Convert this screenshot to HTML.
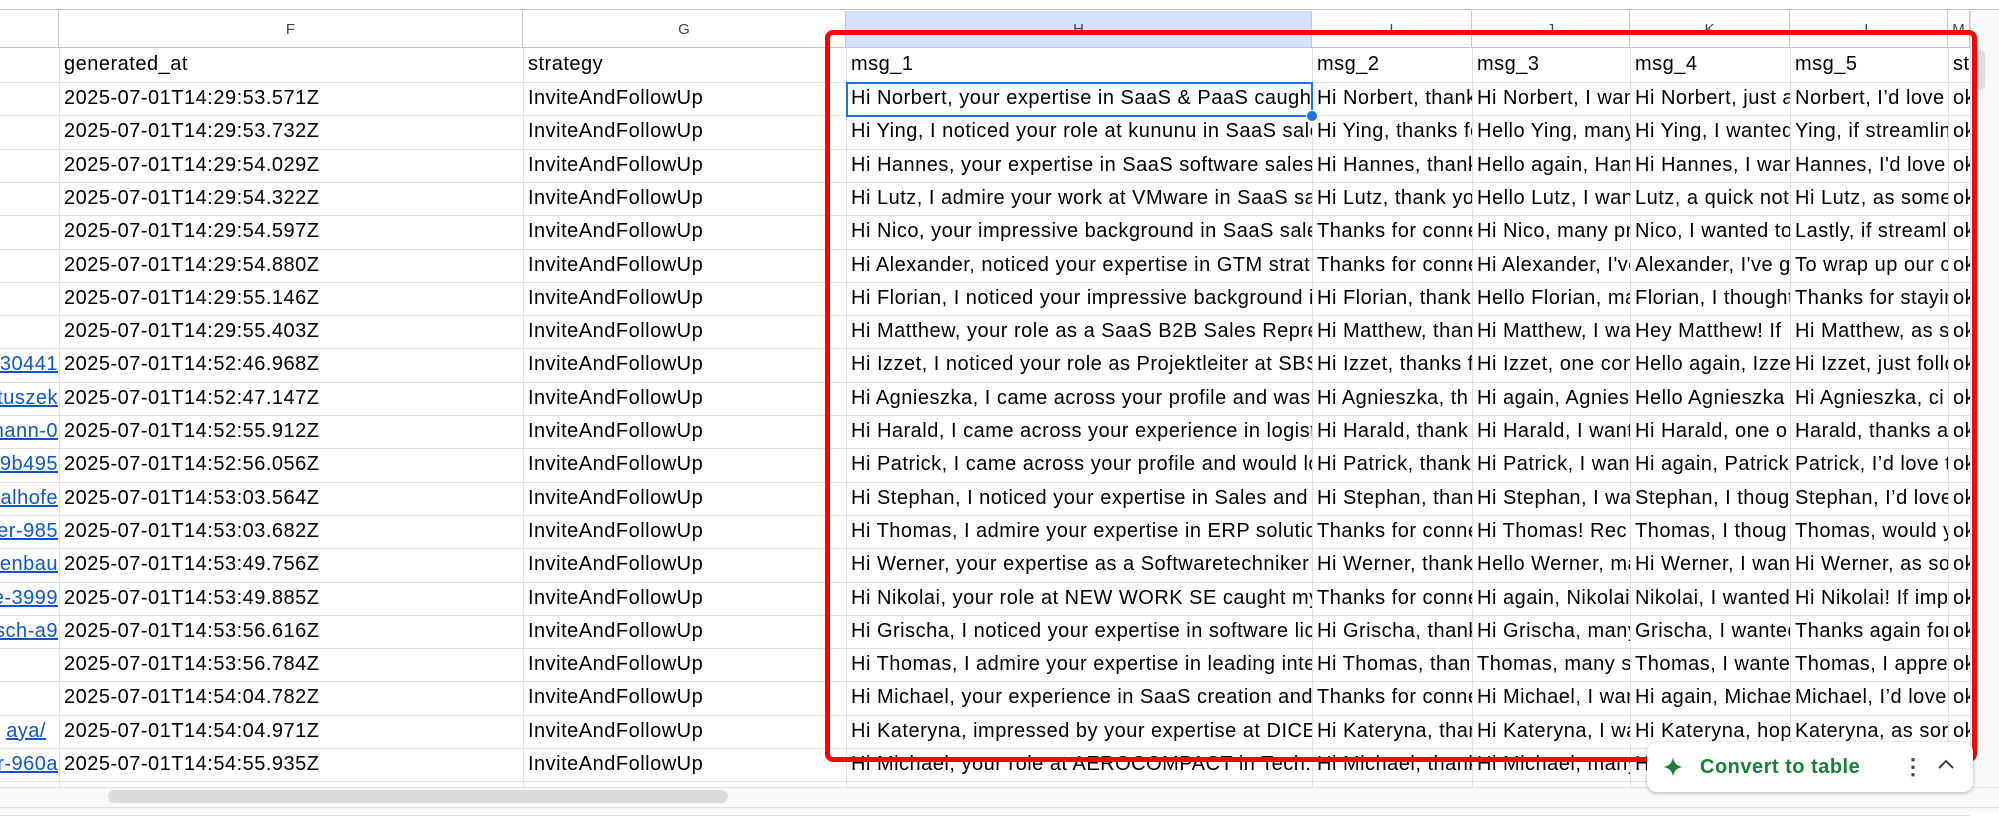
<!DOCTYPE html>
<html><head><meta charset="utf-8">
<style>
*{margin:0;padding:0;box-sizing:border-box}
body{width:1999px;height:812px;overflow:hidden;background:#fff;font-family:"Liberation Sans",Arial,sans-serif;position:relative}
.c{position:absolute;overflow:hidden;white-space:nowrap;font-size:20px;letter-spacing:0.5px;color:#000;line-height:33px;padding-left:5px}
.ch{position:absolute;top:11px;height:37px;line-height:37px;text-align:center;font-size:15px;color:#444;border-right:1px solid #c7c7c7;border-bottom:1px solid #c7c7c7}
.vl{position:absolute;top:48px;height:739px;width:1px;background:#e1e1e1}
.hl{position:absolute;left:0;width:1970px;height:1px;background:#e1e1e1}
.lk{position:absolute;left:0;width:58px;overflow:hidden;white-space:nowrap;font-size:20px;letter-spacing:0.5px;color:#1155cc;line-height:33px;display:flex;justify-content:flex-end}
.lk span{text-decoration:underline}
</style></head><body>
<div style="position:absolute;left:0;top:0;width:1999px;height:10px;background:#fff;border-bottom:1px solid #c7c7c7"></div>
<div id="g"></div>
<div style="position:absolute;left:846px;top:82px;width:467px;height:35px;border:2px solid #1a73e8"></div>
<div style="position:absolute;left:1306px;top:110px;width:12px;height:12px;border-radius:50%;background:#1a73e8;border:1px solid #fff"></div>
<div style="position:absolute;left:1970px;top:11px;width:29px;height:776px;background:#f8f9fa;border-left:1px solid #e1e1e1"></div>
<div style="position:absolute;left:1975px;top:50px;width:10px;height:40px;background:#dadce0;border-radius:5px"></div>
<div style="position:absolute;left:0;top:787px;width:1999px;height:25px;background:#f8f9fa;border-top:1px solid #e1e1e1"></div>
<div style="position:absolute;left:108px;top:790px;width:620px;height:13px;background:#dadce0;border-radius:7px"></div>
<div style="position:absolute;left:0;top:807px;width:1999px;height:1px;background:#e1e1e1"></div>
<div style="position:absolute;left:825px;top:30px;width:1152px;height:732px;border:5px solid #f00;border-radius:8px"></div>
<div style="position:absolute;left:1647px;top:742px;width:326px;height:50px;background:#fff;border-radius:10px;box-shadow:0 1px 4px rgba(0,0,0,.3)"></div>
<svg style="position:absolute;left:1663px;top:757px" width="20" height="20" viewBox="0 0 20 20"><path d="M10 0 Q11 9 20 10 Q11 11 10 20 Q9 11 0 10 Q9 9 10 0Z" fill="#188038"/></svg>
<div style="position:absolute;left:1700px;top:752px;font-size:20px;color:#188038;font-weight:bold;letter-spacing:.5px;line-height:30px">Convert to table</div>
<div style="position:absolute;left:1902px;top:754px;width:10px;font-size:22px;line-height:26px;color:#444;font-weight:bold;text-align:center">⋮</div>
<svg style="position:absolute;left:1937px;top:757px" width="18" height="14" viewBox="0 0 18 14"><path d="M2 11 L9 4 L16 11" stroke="#444" stroke-width="2" fill="none"/></svg>
<script>
var cols=[[0,59,''],[59,523,'F'],[523,846,'G'],[846,1312,'H'],[1312,1472,'I'],[1472,1630,'J'],[1630,1790,'K'],[1790,1948,'L'],[1948,1970,'M']];
var h='';
cols.forEach(function(c,i){h+='<div class="ch" style="left:'+c[0]+'px;width:'+(c[1]-c[0])+'px;'+(c[2]=='H'?'background:#d3e3fd;':'')+'">'+c[2]+'</div>';if(i>0)h+='<div class="vl" style="left:'+c[0]+'px"></div>';});
var ts=['14:29:53.571','14:29:53.732','14:29:54.029','14:29:54.322','14:29:54.597','14:29:54.880','14:29:55.146','14:29:55.403','14:52:46.968','14:52:47.147','14:52:55.912','14:52:56.056','14:53:03.564','14:53:03.682','14:53:49.756','14:53:49.885','14:53:56.616','14:53:56.784','14:54:04.782','14:54:04.971','14:54:55.935','14:54:56.163'];
var lk=['','','','','','','','','30441','atuszek','nann-0','-9b495','nalhofe','ger-985','ttenbau','e-3999','sch-a9','','','aya/','r-960a','nkel/'];
var d=[
["Hi Norbert, your expertise in SaaS & PaaS caught","Hi Norbert, thanks","Hi Norbert, I want","Hi Norbert, just a","Norbert, I’d love"],
["Hi Ying, I noticed your role at kununu in SaaS sales","Hi Ying, thanks for","Hello Ying, many","Hi Ying, I wanted","Ying, if streamlin"],
["Hi Hannes, your expertise in SaaS software sales","Hi Hannes, thank","Hello again, Hann","Hi Hannes, I want","Hannes, I'd love"],
["Hi Lutz, I admire your work at VMware in SaaS sa","Hi Lutz, thank you","Hello Lutz, I want","Lutz, a quick note","Hi Lutz, as some"],
["Hi Nico, your impressive background in SaaS sales","Thanks for connecting","Hi Nico, many pr","Nico, I wanted to","Lastly, if streamli"],
["Hi Alexander, noticed your expertise in GTM strat","Thanks for conne","Hi Alexander, I've","Alexander, I've g","To wrap up our c"],
["Hi Florian, I noticed your impressive background i","Hi Florian, thank","Hello Florian, ma","Florian, I thought","Thanks for staying"],
["Hi Matthew, your role as a SaaS B2B Sales Repre","Hi Matthew, thank","Hi Matthew, I wa","Hey Matthew! If","Hi Matthew, as s"],
["Hi Izzet, I noticed your role as Projektleiter at SBS","Hi Izzet, thanks f","Hi Izzet, one con","Hello again, Izzet","Hi Izzet, just follo"],
["Hi Agnieszka, I came across your profile and was","Hi Agnieszka, th","Hi again, Agnies","Hello Agnieszka","Hi Agnieszka, ci"],
["Hi Harald, I came across your experience in logist","Hi Harald, thank","Hi Harald, I want","Hi Harald, one o","Harald, thanks a"],
["Hi Patrick, I came across your profile and would lo","Hi Patrick, thank","Hi Patrick, I want","Hi again, Patrick","Patrick, I’d love t"],
["Hi Stephan, I noticed your expertise in Sales and","Hi Stephan, than","Hi Stephan, I wa","Stephan, I thoug","Stephan, I’d love"],
["Hi Thomas, I admire your expertise in ERP solutio","Thanks for conne","Hi Thomas! Rec","Thomas, I thoug","Thomas, would y"],
["Hi Werner, your expertise as a Softwaretechniker","Hi Werner, thank","Hello Werner, ma","Hi Werner, I wan","Hi Werner, as so"],
["Hi Nikolai, your role at NEW WORK SE caught my","Thanks for conne","Hi again, Nikolai","Nikolai, I wanted","Hi Nikolai! If imp"],
["Hi Grischa, I noticed your expertise in software lic","Hi Grischa, thank","Hi Grischa, many","Grischa, I wanted","Thanks again for"],
["Hi Thomas, I admire your expertise in leading inte","Hi Thomas, than","Thomas, many s","Thomas, I wante","Thomas, I appre"],
["Hi Michael, your experience in SaaS creation and","Thanks for conne","Hi Michael, I war","Hi again, Michae","Michael, I’d love"],
["Hi Kateryna, impressed by your expertise at DICE","Hi Kateryna, than","Hi Kateryna, I wa","Hi Kateryna, hop","Kateryna, as sor"],
["Hi Michael, your role at AEROCOMPACT in Tech.","Hi Michael, thank","Hi Michael, many","Hi Michael, I wan","Michael, I hope"],
["Hi Markus, I admire your expertise in Tech Sales","Hi Markus, thank","Hi Markus, Tha","Markus, I wanted","Hi Markus, as"]];
function cell(x,w,y,t,hh){return '<div class="c" style="left:'+x+'px;width:'+w+'px;top:'+y+'px;height:'+(hh||33)+'px">'+t+'</div>';}
var hy=48;
h+='<div class="hl" style="top:82px"></div>';
h+=cell(59,464,hy,'generated_at',34)+cell(523,323,hy,'strategy',34)+cell(846,466,hy,'msg_1',34)+cell(1312,160,hy,'msg_2',34)+cell(1472,158,hy,'msg_3',34)+cell(1630,160,hy,'msg_4',34)+cell(1790,158,hy,'msg_5',34)+cell(1948,22,hy,'st',34);
for(var i=0;i<22;i++){
 var y=Math.round(82+i*33.3);var hh=i==21?Math.max(1,787-y):33;
 h+='<div class="hl" style="top:'+Math.round(82+(i+1)*33.3)+'px"></div>';
 if(lk[i])h+='<div class="lk" style="top:'+y+'px;height:'+hh+'px;'+(i==19?'padding-right:12px;':'')+'"><span>'+lk[i]+'</span></div>';
 h+=cell(59,464,y,'2025-07-01T'+ts[i]+'Z',hh)+cell(523,323,y,'InviteAndFollowUp',hh);
 var r=d[i];
 h+=cell(846,466,y,r[0],hh)+cell(1312,160,y,r[1],hh)+cell(1472,158,y,r[2],hh)+cell(1630,160,y,r[3],hh)+cell(1790,158,y,r[4],hh)+cell(1948,22,y,'ok',hh);
}
document.getElementById('g').innerHTML=h;
</script>
</body></html>
